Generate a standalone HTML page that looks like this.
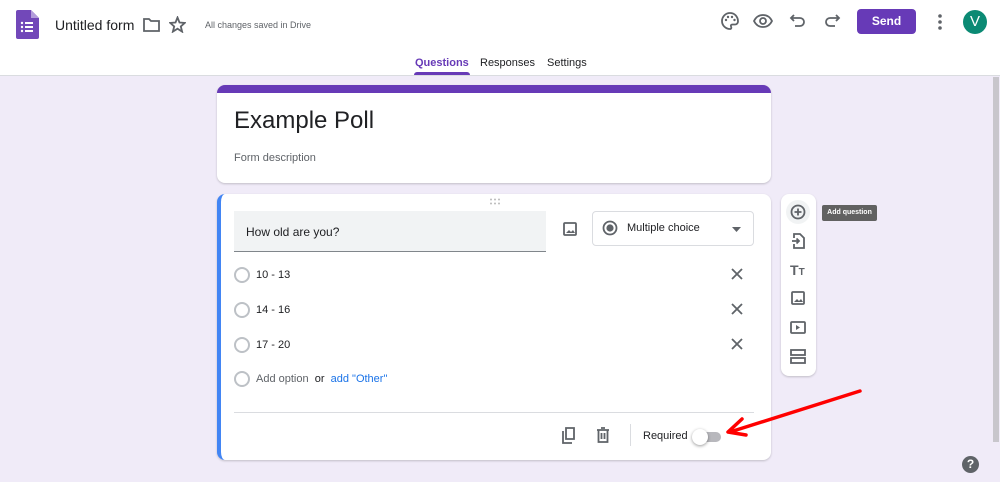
<!DOCTYPE html>
<html><head><style>
*{margin:0;padding:0;box-sizing:border-box}
body{width:1000px;height:482px;overflow:hidden;background:#f0ebf8;font-family:"Liberation Sans",sans-serif;color:#202124;position:relative}
.abs{position:absolute}
.hdr{left:0;top:0;width:1000px;height:76px;background:#fff;border-bottom:1px solid #dadce0}
.card{background:#fff;border-radius:8px;box-shadow:0 1px 2px rgba(0,0,0,.2)}
svg{display:block}
.ic{stroke:#5f6368;fill:none;stroke-width:1.8}
</style></head><body>
<div class="abs hdr"></div>
<svg class="abs" style="left:16px;top:10px" width="23" height="29" viewBox="0 0 23 29"><path d="M2 0H15L23 8V27a2 2 0 0 1-2 2H2a2 2 0 0 1-2-2V2a2 2 0 0 1 2-2z" fill="#7248b9"/><path d="M15 0V8H23z" fill="#b39ddb"/><g fill="#fff"><circle cx="6" cy="13" r="1.2"/><circle cx="6" cy="17" r="1.2"/><circle cx="6" cy="21" r="1.2"/><rect x="9" y="12" width="8" height="2"/><rect x="9" y="16" width="8" height="2"/><rect x="9" y="20" width="8" height="2"/></g></svg>
<div class="abs" style="left:55px;top:17px;font-size:14px">Untitled form</div>
<svg class="abs" style="left:143px;top:17px" width="17" height="15"><path class="ic" d="M1 2h5l2 2h8v10H1z"/></svg>
<svg class="abs" style="left:169px;top:16px" width="17" height="17"><path class="ic" stroke-width="1.4" d="M8.5 1.5l2 5 5.3.4-4 3.5 1.3 5.2-4.6-2.9-4.6 2.9 1.3-5.2-4-3.5 5.3-.4z"/></svg>
<div class="abs" style="left:205px;top:20px;font-size:9px;color:#5f6368">All changes saved in Drive</div>
<svg class="abs" style="left:720px;top:11px" width="20" height="20"><path class="ic" d="M10 2a8 8 0 0 0 0 16c1.5 0 1.5-1.5 1-2.5s0-2 1.5-2H15a3 3 0 0 0 3-3C18 5.5 14.5 2 10 2z"/><g fill="#5f6368"><circle cx="6" cy="9" r="1.2"/><circle cx="8" cy="6" r="1.2"/><circle cx="12" cy="6" r="1.2"/><circle cx="14.5" cy="9" r="1.2"/></g></svg>
<svg class="abs" style="left:753px;top:12px" width="20" height="18"><path class="ic" d="M1 9c2-4 5-6 9-6s7 2 9 6c-2 4-5 6-9 6s-7-2-9-6z"/><circle class="ic" cx="10" cy="9" r="3"/></svg>
<svg class="abs" style="left:789px;top:12px" width="18" height="18"><path class="ic" d="M5 3L2 6l3 3M2 6h9a4 4 0 0 1 0 8H6"/></svg>
<svg class="abs" style="left:823px;top:12px" width="18" height="18"><path class="ic" d="M13 3l3 3-3 3M16 6H7a4 4 0 0 0 0 8h5"/></svg>
<div class="abs" style="left:857px;top:9px;width:59px;height:25px;background:#673ab7;border-radius:4px;color:#fff;font-size:12px;font-weight:bold;text-align:center;line-height:25px">Send</div>
<svg class="abs" style="left:936px;top:13px" width="8" height="18"><g fill="#5f6368"><circle cx="4" cy="3" r="1.8"/><circle cx="4" cy="9" r="1.8"/><circle cx="4" cy="15" r="1.8"/></g></svg>
<div class="abs" style="left:963px;top:10px;width:24px;height:24px;border-radius:50%;background:#0b8a74;color:#fff;font-size:15px;text-align:center;line-height:24px">V</div>
<div class="abs" style="left:415px;top:57px;font-size:11px;color:#673ab7;font-weight:bold">Questions</div>
<div class="abs" style="left:414px;top:72px;width:56px;height:3px;background:#673ab7;border-radius:3px 3px 0 0"></div>
<div class="abs" style="left:480px;top:57px;font-size:11px;color:#202124">Responses</div>
<div class="abs" style="left:547px;top:57px;font-size:11px;color:#202124">Settings</div>
<div class="abs" style="left:993px;top:77px;width:6px;height:365px;background:#c8c6cc"></div>

<div class="abs card" style="left:217px;top:85px;width:554px;height:98px;overflow:hidden;border-top:8px solid #673ab7">
<div class="abs" style="left:17px;top:14px;font-size:24px">Example Poll</div>
<div class="abs" style="left:17px;top:59px;font-size:11px;color:#5f6368">Form description</div></div>

<div class="abs card" style="left:217px;top:194px;width:554px;height:266px;overflow:hidden;border-left:4px solid #4285f4">
<svg class="abs" style="left:268px;top:4px" width="12" height="7"><g fill="#bbb"><circle cx="2" cy="1.5" r="1"/><circle cx="6" cy="1.5" r="1"/><circle cx="10" cy="1.5" r="1"/><circle cx="2" cy="5.5" r="1"/><circle cx="6" cy="5.5" r="1"/><circle cx="10" cy="5.5" r="1"/></g></svg>
<div class="abs" style="left:13px;top:17px;width:312px;height:41px;background:#f1f3f4;border-bottom:1px solid #80868b"></div>
<div class="abs" style="left:25px;top:31px;font-size:12px">How old are you?</div>
<svg class="abs" style="left:342px;top:28px" width="14" height="14"><rect class="ic" stroke-width="1.5" x="1" y="1" width="12" height="12" rx="1"/><path d="M3 11l3-3 2 2 2-2 2 3z" fill="#5f6368"/></svg>
<div class="abs" style="left:371px;top:17px;width:162px;height:35px;border:1px solid #dadce0;border-radius:4px"></div>
<svg class="abs" style="left:381px;top:26px" width="16" height="16"><circle class="ic" stroke-width="1.6" cx="8" cy="8" r="6.5"/><circle cx="8" cy="8" r="3.6" fill="#5f6368"/></svg>
<div class="abs" style="left:406px;top:28px;font-size:11px">Multiple choice</div>
<svg class="abs" style="left:511px;top:33px" width="9" height="5"><path d="M0 0h9L4.5 5z" fill="#5f6368"/></svg>
<div class="abs" style="left:13px;top:73px;width:16px;height:16px;border:2px solid #bdc1c6;border-radius:50%"></div>
<div class="abs" style="left:35px;top:75px;font-size:11px">10 - 13</div>
<div class="abs" style="left:13px;top:108px;width:16px;height:16px;border:2px solid #bdc1c6;border-radius:50%"></div>
<div class="abs" style="left:35px;top:110px;font-size:11px">14 - 16</div>
<div class="abs" style="left:13px;top:143px;width:16px;height:16px;border:2px solid #bdc1c6;border-radius:50%"></div>
<div class="abs" style="left:35px;top:145px;font-size:11px">17 - 20</div>
<div class="abs" style="left:13px;top:177px;width:16px;height:16px;border:2px solid #bdc1c6;border-radius:50%"></div>
<div class="abs" style="left:35px;top:179px;font-size:11px;color:#5f6368">Add option <span style="color:#202124">&nbsp;or&nbsp;</span> <span style="color:#1a73e8">add "Other"</span></div>
<svg class="abs" style="left:510px;top:74px" width="12" height="12"><path class="ic" stroke-width="1.6" d="M1 1l10 10M11 1L1 11"/></svg>
<svg class="abs" style="left:510px;top:109px" width="12" height="12"><path class="ic" stroke-width="1.6" d="M1 1l10 10M11 1L1 11"/></svg>
<svg class="abs" style="left:510px;top:144px" width="12" height="12"><path class="ic" stroke-width="1.6" d="M1 1l10 10M11 1L1 11"/></svg>
<div class="abs" style="left:13px;top:218px;width:520px;height:1px;background:#dadce0"></div>
<svg class="abs" style="left:339px;top:233px" width="16" height="17"><path class="ic" stroke-width="1.6" d="M3 4v12h9M6 1h8v11H6z"/></svg>
<svg class="abs" style="left:375px;top:233px" width="14" height="16"><path class="ic" stroke-width="1.6" d="M1 3h12M5 1h4M2.5 3v12h9V3M5.5 6v6M8.5 6v6"/></svg>
<div class="abs" style="left:409px;top:230px;width:1px;height:22px;background:#dadce0"></div>
<div class="abs" style="left:422px;top:236px;font-size:11px">Required</div>
<div class="abs" style="left:476px;top:238px;width:24px;height:10px;border-radius:5px;background:#b8b8bd"></div>
<div class="abs" style="left:471px;top:235px;width:16px;height:16px;border-radius:50%;background:#fff;box-shadow:0 1px 3px rgba(0,0,0,.4)"></div>
</div>

<div class="abs card" style="left:781px;top:194px;width:35px;height:182px"></div>
<div class="abs" style="left:786px;top:200px;width:24px;height:24px;border-radius:50%;background:#f1f3f4"></div>
<svg class="abs" style="left:790px;top:204px" width="16" height="16"><circle class="ic" stroke-width="1.5" cx="8" cy="8" r="6.5"/><path class="ic" stroke-width="1.5" d="M8 4.5v7M4.5 8h7"/></svg>
<svg class="abs" style="left:791px;top:233px" width="14" height="16"><path class="ic" stroke-width="1.5" d="M3 5V1h6l4 4v10H3v-4M1 8h7M5.5 5.5L8 8l-2.5 2.5"/></svg>
<div class="abs" style="left:790px;top:262px;font-size:14px;font-weight:bold;color:#5f6368">T<span style="font-size:10px">T</span></div>
<svg class="abs" style="left:791px;top:291px" width="14" height="14"><rect class="ic" stroke-width="1.5" x="1" y="1" width="12" height="12" rx="1"/><path d="M3 11l3-3 2 2 2-2 2 3z" fill="#5f6368"/></svg>
<svg class="abs" style="left:790px;top:321px" width="16" height="13"><rect class="ic" stroke-width="1.5" x="1" y="1" width="14" height="11" rx="1"/><path d="M6 4v5l4-2.5z" fill="#5f6368"/></svg>
<svg class="abs" style="left:790px;top:349px" width="16" height="15"><rect class="ic" stroke-width="1.5" x="1" y="1" width="14" height="5"/><rect class="ic" stroke-width="1.5" x="1" y="9" width="14" height="5"/></svg>
<div class="abs" style="left:822px;top:205px;width:55px;height:16px;background:#616161;color:#fff;font-size:7px;font-weight:bold;text-align:center;line-height:16px;border-radius:2px">Add question</div>

<svg class="abs" style="left:720px;top:385px" width="145" height="60"><path d="M140 6L10 47" stroke="#f00" stroke-width="3.5" fill="none" stroke-linecap="round"/><path d="M22 34L8 47l18 3" stroke="#f00" stroke-width="3.5" fill="none" stroke-linecap="round" stroke-linejoin="round"/></svg>
<div class="abs" style="left:962px;top:456px;width:17px;height:17px;border-radius:50%;background:#5f6368;color:#fff;font-size:12px;font-weight:bold;text-align:center;line-height:17px">?</div>
</body></html>
